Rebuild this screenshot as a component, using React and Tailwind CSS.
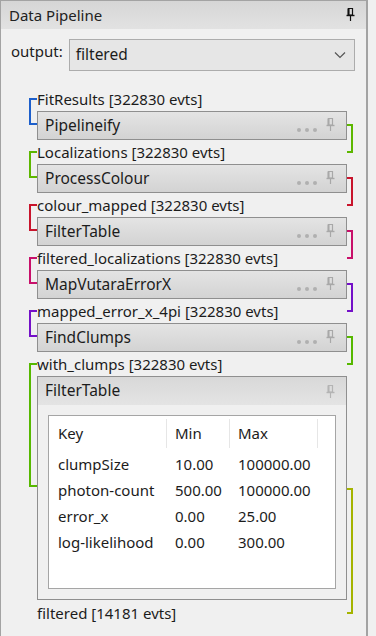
import React from 'react';

const STAGES = [
  { input: 'FitResults [322830 evts]', inColor: '#1d5fcb', name: 'Pipelineify', outColor: '#5db700' },
  { input: 'Localizations [322830 evts]', inColor: '#5db700', name: 'ProcessColour', outColor: '#c8142c' },
  { input: 'colour_mapped [322830 evts]', inColor: '#c8142c', name: 'FilterTable', outColor: '#c8106a' },
  { input: 'filtered_localizations [322830 evts]', inColor: '#c8106a', name: 'MapVutaraErrorX', outColor: '#7410c8' },
  { input: 'mapped_error_x_4pi [322830 evts]', inColor: '#7410c8', name: 'FindClumps', outColor: '#56b800' },
];

const FILTERS = [
  ['clumpSize', '10.00', '100000.00'],
  ['photon-count', '500.00', '100000.00'],
  ['error_x', '0.00', '25.00'],
  ['log-likelihood', '0.00', '300.00'],
];

function Pin({ color = '#111', className = '' }) {
  return (
    <svg width="9" height="14" viewBox="0 0 9 14" className={className} fill="none">
      <path d="M2.5 1.5h4v6.5h-4z" stroke={color} strokeWidth="1.2" />
      <path d="M2.5 1.5v6.5" stroke={color} strokeWidth="2" />
      <path d="M0.5 8.5h8" stroke={color} strokeWidth="1.4" />
      <path d="M4.5 9v5" stroke={color} strokeWidth="1.2" />
    </svg>
  );
}

function Dots() {
  return (
    <div className="flex items-center gap-[4px] mt-[9px]">
      <span className="w-[4px] h-[4px] rounded-full bg-[#b0b0b0]" />
      <span className="w-[4px] h-[4px] rounded-full bg-[#b0b0b0]" />
      <span className="w-[4px] h-[4px] rounded-full bg-[#b0b0b0]" />
    </div>
  );
}

function Label({ children, className = '' }) {
  return (
    <div className={`h-[24px] pl-[36px] pt-[1px] leading-[22px] text-[15px] text-[#1c1c1c] whitespace-nowrap ${className}`}>
      {children}
    </div>
  );
}

function Stage({ stage }) {
  return (
    <div className="relative">
      {/* connector brackets */}
      <div
        className="absolute left-[28px] top-[11px] w-[8px] h-[27px] border-l-2 border-t-2 border-b-2"
        style={{ borderColor: stage.inColor }}
      />
      <div
        className="absolute left-[346px] top-[37px] w-[6px] h-[29px] border-r-2 border-t-2 border-b-2"
        style={{ borderColor: stage.outColor }}
      />
      <Label>{stage.input}</Label>
      <div className="ml-[36px] w-[310px] h-[29px] border border-[#8f8f8f] bg-gradient-to-b from-[#e4e4e4] to-[#d3d3d3] flex items-center pl-[7px] pr-[11px]">
        <span className="text-[15.5px] text-[#1c1c1c]">{stage.name}</span>
        <div className="ml-auto flex items-center gap-[9px]">
          <Dots />
          <Pin color="#a8a8a8" className="-mt-[3px]" />
        </div>
      </div>
    </div>
  );
}

function FilterStage() {
  return (
    <div className="relative">
      <div className="absolute left-[28px] top-[11px] w-[8px] h-[124px] border-l-2 border-t-2 border-b-2 border-[#56b800]" />
      <div className="absolute left-[346px] top-[136px] w-[6px] h-[126px] border-r-2 border-t-2 border-b-2 border-[#a5b400]" />
      <Label>with_clumps [322830 evts]</Label>
      <div className="ml-[36px] w-[310px] h-[224px] border border-[#8f8f8f] bg-[#f0f0f0] flex flex-col">
        <div className="h-[28px] shrink-0 bg-gradient-to-b from-[#d8d8d8] to-[#e4e4e4] flex items-center pl-[7px] pr-[11px]">
          <span className="text-[15.5px] text-[#1c1c1c]">FilterTable</span>
          <Pin color="#b4b4b4" className="ml-auto" />
        </div>
        <div className="flex-1 p-[10px]">
          <div className="h-full border border-[#a5a5a5] bg-white">
            <div className="grid grid-cols-[118px_63px_88px_1fr] h-[35px] text-[15px] text-[#1c1c1c]">
              <div className="pl-[9px] flex items-center border-r border-[#e6e6e6] my-[3px]">Key</div>
              <div className="pl-[8px] flex items-center border-r border-[#e6e6e6] my-[3px]">Min</div>
              <div className="pl-[8px] flex items-center border-r border-[#e6e6e6] my-[3px]">Max</div>
              <div />
            </div>
            {FILTERS.map(([key, min, max]) => (
              <div key={key} className="grid grid-cols-[118px_63px_88px_1fr] h-[26px] items-center text-[15px] text-[#1c1c1c]">
                <div className="pl-[9px] whitespace-nowrap">{key}</div>
                <div className="pl-[8px]">{min}</div>
                <div className="pl-[8px]">{max}</div>
                <div />
              </div>
            ))}
          </div>
        </div>
      </div>
      <Label className="pt-[2px]">filtered [14181 evts]</Label>
    </div>
  );
}

export default function App() {
  return (
    <div className="w-[376px] h-[636px] bg-[#f0f0f0] overflow-hidden" style={{ fontFamily: '"Noto Sans", "Open Sans", sans-serif' }}>
      <div className="w-[368px] h-full border-l border-t border-r-2 border-[#a3a3a3] flex flex-col">
        <div className="h-[28px] shrink-0 bg-gradient-to-b from-[#d6d6d6] to-[#e2e2e2] flex items-center pl-[8px] pr-[11px]">
          <span className="text-[15px] text-[#222]">Data Pipeline</span>
          <Pin className="ml-auto -mt-[2px]" />
        </div>

        <div className="flex items-start pt-[10px] pl-[10px]">
          <span className="text-[15px] text-[#1c1c1c] mt-[1px]">output:</span>
          <div className="ml-[6px] w-[286px] h-[32px] border border-[#acacac] bg-[#e6e6e6] flex items-center pl-[6px] pr-[8px]">
            <span className="text-[15.5px] text-[#1c1c1c]">filtered</span>
            <svg width="12" height="8" viewBox="0 0 12 8" className="ml-auto" fill="none">
              <path d="M1 1.5l5 5 5-5" stroke="#555" strokeWidth="1.2" />
            </svg>
          </div>
        </div>

        <div className="pt-[16px]">
          {STAGES.map(s => (
            <Stage key={s.name + s.input} stage={s} />
          ))}
          <FilterStage />
        </div>
      </div>
    </div>
  );
}
